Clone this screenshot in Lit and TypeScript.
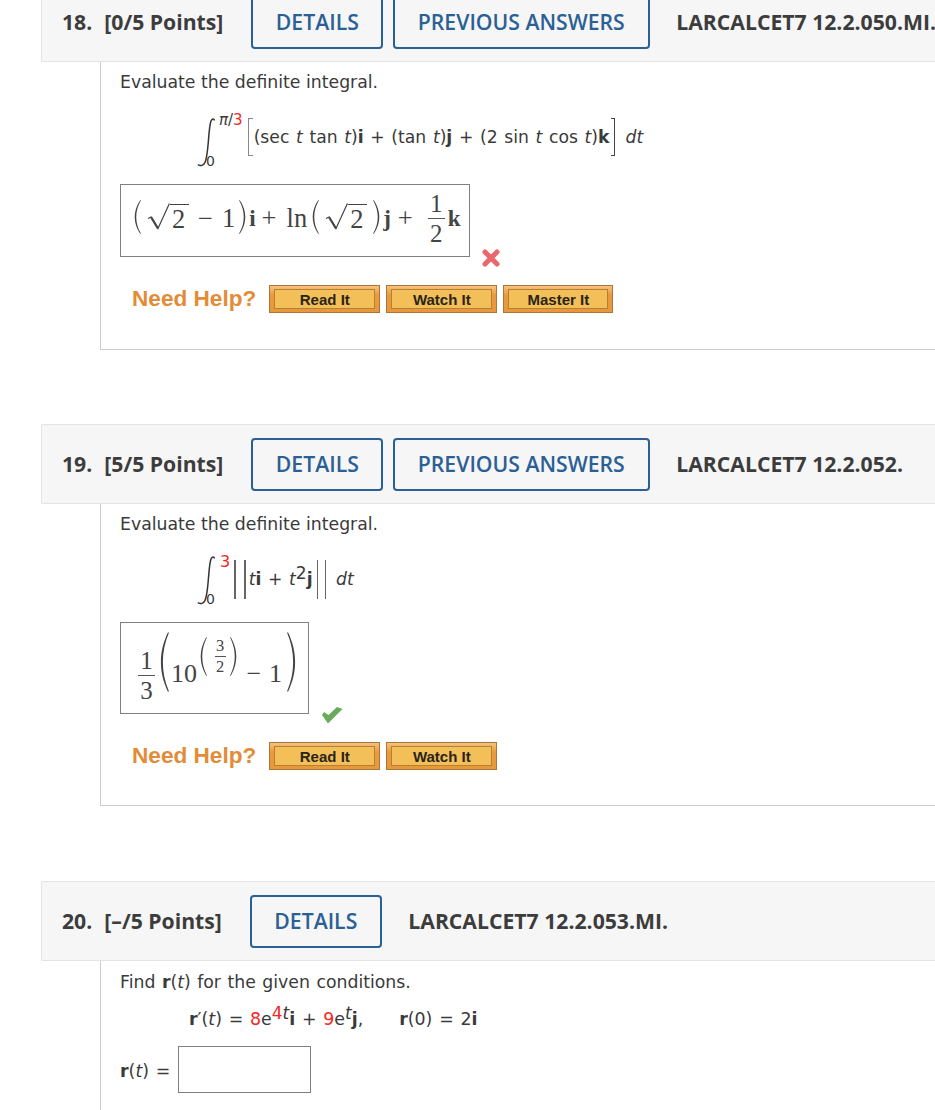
import { LitElement, html, css } from "lit";
import { customElement } from "lit/decorators.js";

const paren = (w: number, h: number, right = false) => html`<svg class="paren ${right ? "flip" : ""}" width=${w} height=${h} viewBox="0 0 10 40" preserveAspectRatio="none">
  <path d="M9 0C3.5 7 1 13 1 20C1 27 3.5 33 9 40L9.8 39.4C5.5 33 3.2 27 3.2 20C3.2 13 5.5 7 9.8 .6Z" fill="#444"/></svg>`;

const radical = html`<svg class="radical" width="23" height="27" viewBox="0 0 23 27">
  <path d="M1 15.5L4 14L11 25.5L22.4 .6" fill="none" stroke="#444" stroke-width="1.2"/><path d="M4 14L11 25.5" stroke="#444" stroke-width="2.2"/></svg>`;

const integral = (cls = "") => html`<svg class="integral ${cls}" width="20" height="52" viewBox="0 0 20 52">
  <path d="M18.5 5.5C18 3.6 16.2 3.5 15 6C13.6 9.5 13.2 16 12.4 26C11.6 36 11 43 9 47.5C7.6 50.6 4.6 51.4 1.8 49.6" fill="none" stroke="#333" stroke-width="1.5"/></svg>`;

const frac = (a: string, b: string, cls = "") => html`<span class="frac ${cls}"><span>${a}</span><span class="den">${b}</span></span>`;

const sqrt2 = html`<span class="sqrt">${radical}<span class="rad">2</span></span>`;

@customElement("app-root")
export class AppRoot extends LitElement {
  static styles = css`
    :host { display: block; width: 935px; height: 1110px; overflow: hidden; color: #3a3a3a; font-family: "DejaVu Sans", sans-serif; font-size: 17.3px; }
    .page { margin-top: -18px; padding-left: 41px; white-space: nowrap; }
    .head { display: flex; align-items: center; height: 80px; box-sizing: border-box; padding-left: 20px; background: #f6f6f6; border: 1px solid #e4e4e4; border-right: none; border-radius: 2px 0 0 2px; font: 700 21.2px "Open Sans", sans-serif; color: #3c3c3c; }
    .num { margin-right: 12px; padding-bottom: 2px; }
    .pts { margin-right: 28px; padding-bottom: 2px; }
    .btn { height: 53px; box-sizing: border-box; padding: 0 22.5px 2px; margin-right: 9.5px; display: flex; align-items: center; border: 2px solid #2a6095; border-radius: 4px; color: #2a6095; font-weight: 600; }
    .btn.prev { padding: 0 23px 2px; }
    .code { margin-left: 17px; padding-bottom: 2px; }
    .body { margin-left: 59px; border-left: 1px solid #ccc; border-bottom: 1px solid #ccc; padding-left: 19px; box-sizing: border-box; margin-bottom: 75px; }
    .s18 { height: 288px; margin-bottom: 74px; }
    .s19 { height: 302px; }
    .s20 { height: 200px; border-bottom: none; }
    .prompt { padding-top: 8px; line-height: 24px; }
    .row { display: flex; align-items: center; font-size: 17.2px; word-spacing: 1.2px; }
    .int-row { margin-left: 76px; margin-top: 17px; height: 52px; }
    .shift { margin-top: 7px; }
    .limits { display: flex; flex-direction: column; justify-content: space-between; height: 52px; font-size: 15px; line-height: 14px; margin-left: -10px; margin-right: 5px; }
    .limits .up { margin-left: 13px; margin-top: -2px; }
    .limits .lo { margin-bottom: -1px; font-size: 14px; }
    .limits.three { margin-right: 4px; }
    .limits.three .up { font-size: 16px; margin-left: 14px; margin-top: 2px; }
    .red { color: #f5261d; }
    .lb { width: 4px; height: 36px; border: 1.5px solid #8a8a8a; border-right: none; margin-right: 1px; }
    .rb { width: 3px; height: 36px; border: 1.5px solid #444; border-left: none; margin-left: 1px; }
    .bar { width: 1.5px; height: 39px; background: #666; margin-right: 8.5px; }
    .bar.inner { margin-right: 3px; }
    .bar.after { margin: 0 0 0 4px; }
    .bar.after2 { margin: 0 0 0 6.5px; }
    .dt { margin-left: 11px; }
    .dt.near { margin-left: 10px; }
    b { font-weight: 700; }
    i { font-style: oblique; }
    .answer-row { display: flex; align-items: flex-end; gap: 12px; }
    .ans { display: flex; align-items: center; box-sizing: border-box; border: 1px solid #808080; background: #fff; font: 26.5px/1 "Liberation Serif", serif; color: #444; }
    .ans b { font-size: 23px; }
    .a18 { width: 350px; height: 73px; margin-top: 21px; padding: 0 0 8px 13px; }
    .a19 { width: 189px; height: 92px; margin-top: 17px; padding-left: 17px; font-size: 26px; }
    .paren { display: block; flex: none; }
    .flip { transform: scaleX(-1); }
    .sqrt { display: flex; align-items: flex-start; flex: none; }
    .rad { border-top: 1.3px solid #444; padding: 2px 3.75px 0 2px; margin-top: 1px; line-height: 24px; }
    .dn { margin-top: 4px; }
    .l3 { margin-left: 3px; } .l4 { margin-left: 4px; } .l5 { margin-left: 5px; } .l6 { margin-left: 6px; } .l7 { margin-left: 7px; }
    .l9 { margin-left: 9px; } .l10 { margin-left: 10px; } .l15 { margin-left: 15px; }
    .frac { display: inline-flex; flex-direction: column; align-items: center; }
    .den { border-top: 1px solid #555; padding: 0 2.2px; }
    .frac.half { font-size: 25px; line-height: 29px; margin-top: 3px; }
    .frac.third { font-size: 25px; line-height: 29px; margin-top: 14px; }
    .frac.tiny { font-size: 16.5px; line-height: 19.5px; }
    .frac.tiny .den { padding: 0 1.2px; }
    .big-l, .big-r { margin-bottom: 12px; }
    .big-l { margin-left: 5px; }
    .ten { align-self: flex-end; margin: 0 0 26px 2px; }
    .pow { display: flex; align-items: center; align-self: flex-start; margin: 13px 0 0 3px; }
    .pow .frac { margin: 0 4px 0 8px; }
    .minus { align-self: flex-end; margin: 0 4px 26px 10px; letter-spacing: .7px; }
    .icon { flex: none; margin-bottom: -10px; }
    .check { margin: 0 0 -10px 1px; }
    .help { display: flex; align-items: center; margin-left: 12px; margin-top: 28px; }
    .help-t { font: 700 22.6px "Liberation Sans", sans-serif; color: #e38c37; margin-right: 13px; }
    .ob { width: 111px; height: 28px; box-sizing: border-box; margin-right: 6px; padding: 3px 4px; border: 1px solid #a9763b; background: linear-gradient(#f6c27d, #ea9a3c 35%, #e8983a); }
    .ob.m { width: 110px; }
    .ob span { display: flex; align-items: center; justify-content: center; height: 100%; box-sizing: border-box; border: 1px solid #b28037; background: #f2bf58; font: 700 15px "Liberation Sans", sans-serif; color: #2a2418; }
    .p20 { padding-top: 9px; word-spacing: 1px; }
    .given { margin: 13px 0 0 69px; height: 24px; line-height: 24px; font-size: 17.4px; word-spacing: 1.2px; }
    sup { font-size: 17px; line-height: 0; vertical-align: 6px; }
    .unknown { margin-top: 15px; display: flex; align-items: center; gap: 8px; font-size: 17.4px; word-spacing: 1.2px; }
    .unknown span { margin-top: 3px; }
    .box { width: 133px; height: 47px; box-sizing: border-box; border: 1px solid #808080; }
    .gap { margin-left: 36px; }
  `;

  head(n: string, pts: string, prev: boolean, code: string) {
    return html`<div class="head"><span class="num">${n}</span><span class="pts">${pts}</span>
      <span class="btn">DETAILS</span>${prev ? html`<span class="btn prev">PREVIOUS ANSWERS</span>` : ""}<span class="code">${code}</span></div>`;
  }

  help(items: string[]) {
    return html`<div class="help"><span class="help-t">Need Help?</span>
      ${items.map((t) => html`<div class="ob ${t === "Master It" ? "m" : ""}"><span>${t}</span></div>`)}</div>`;
  }

  render() {
    return html`<div class="page">
      ${this.head("18.", "[0/5 Points]", true, "LARCALCET7 12.2.050.MI.")}
      <div class="body s18">
        <div class="prompt">Evaluate the definite integral.</div>
        <div class="row int-row">${integral("shift")}
          <div class="limits shift"><span class="up"><i>π</i>/<span class="red">3</span></span><span class="lo">0</span></div>
          <span class="lb"></span><span>(sec <i>t</i> tan <i>t</i>)<b>i</b> + (tan <i>t</i>)<b>j</b> + (2 sin <i>t</i> cos <i>t</i>)<b>k</b></span><span class="rb"></span>
          <span class="dt"><i>dt</i></span>
        </div>
        <div class="answer-row">
          <div class="ans a18">
            ${paren(7, 34)}<span class="l6"></span>${sqrt2}
            <span class="l9 dn">−</span><span class="l9 dn">1</span><span class="l4"></span>${paren(7, 34, true)}<b class="l3 dn">i</b><span class="l6 dn">+</span><span class="l10 dn">ln</span>
            <span class="l5"></span>${paren(7, 34)}<span class="l6"></span>${sqrt2}<span class="l6"></span>${paren(7, 34, true)}<b class="l3 dn">j</b><span class="l7 dn">+</span><span class="l15"></span>
            ${frac("1", "2", "half")}<b class="l3 dn">k</b>
          </div>
          <svg class="icon" width="18" height="18" viewBox="0 0 18 18"><path d="M3 3L15 15M15 3L3 15" stroke="#e8686c" stroke-width="5" stroke-linecap="round"/></svg>
        </div>
        ${this.help(["Read It", "Watch It", "Master It"])}
      </div>

      ${this.head("19.", "[5/5 Points]", true, "LARCALCET7 12.2.052.")}
      <div class="body s19">
        <div class="prompt">Evaluate the definite integral.</div>
        <div class="row int-row">${integral()}
          <div class="limits three"><span class="up red">3</span><span class="lo">0</span></div>
          <span class="bar"></span><span class="bar inner"></span>
          <span><i>t</i><b>i</b> + <i>t</i><sup>2</sup><b>j</b></span>
          <span class="bar after"></span><span class="bar after2"></span>
          <span class="dt near"><i>dt</i></span>
        </div>
        <div class="answer-row">
          <div class="ans a19">
            ${frac("1", "3", "third")}<span class="big-l">${paren(9, 60)}</span>
            <span class="ten">10</span>
            <span class="pow">${paren(7, 39)}${frac("3", "2", "tiny")}${paren(7, 39, true)}</span>
            <span class="minus">− 1</span><span class="big-r">${paren(9, 60, true)}</span>
          </div>
          <svg class="check" width="21" height="18" viewBox="0 0 21 18"><path d="M0 9L6 17.5L20.5 3L15 1L6.5 9L2 6Z" fill="#69aa5f"/></svg>
        </div>
        ${this.help(["Read It", "Watch It"])}
      </div>

      ${this.head("20.", "[–/5 Points]", false, "LARCALCET7 12.2.053.MI.")}
      <div class="body s20">
        <div class="prompt p20">Find <b>r</b>(<i>t</i>) for the given conditions.</div>
        <div class="given"><b>r</b>′(<i>t</i>) = <span class="red">8</span>e<sup class="red">4</sup><sup><i>t</i></sup><b>i</b> + <span class="red">9</span>e<sup><i>t</i></sup><b>j</b>,<span class="gap"><b>r</b>(0) = 2<b>i</b></span></div>
        <div class="unknown"><span><b>r</b>(<i>t</i>) =</span><div class="box"></div></div>
      </div>
    </div>`;
  }
}
